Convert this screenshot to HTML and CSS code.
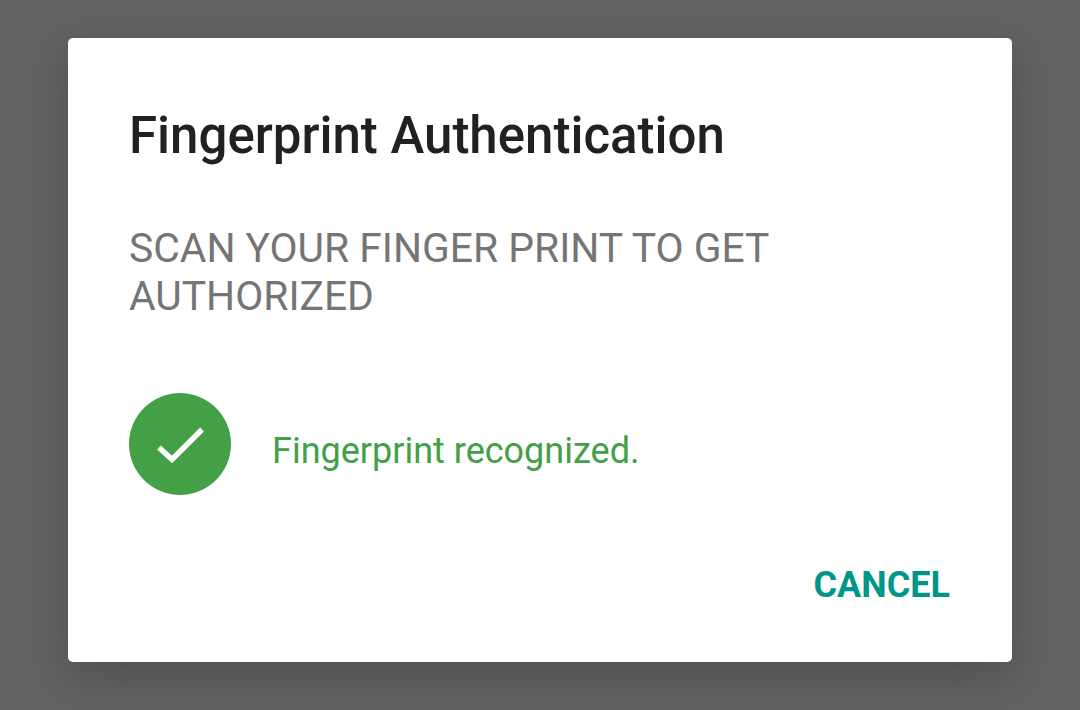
FILE: index.html
```html
<!DOCTYPE html>
<html lang="en">
<head>
  <meta charset="UTF-8" />
  <title>Fingerprint Authentication</title>
  <link rel="stylesheet" href="styles.css">
</head>
<body>
  <div class="dialog">
    <h1 class="title">Fingerprint Authentication</h1>
    <p class="desc">SCAN YOUR FINGER PRINT TO GET AUTHORIZED</p>
    <div class="status">
      <div class="status-icon">
        <svg width="102" height="102" viewBox="0 0 102 102">
          <path d="M30 54.500 L43 66.500 L73 36.500" fill="none" stroke="#fff" stroke-width="5.500"/>
        </svg>
      </div>
      <span class="status-text">Fingerprint recognized.</span>
    </div>
    <div class="actions">
      <button class="cancel">CANCEL</button>
    </div>
  </div>
</body>
</html>
```

FILE: styles.css
```css
html, body {
  height: 100%;
}
body {
  margin: 0;
  background: #636363;
  font-family: Roboto, sans-serif;
  overflow: hidden;
}
.dialog {
  box-sizing: border-box;
  width: 944px;
  height: 624px;
  margin: 38px 0 0 68px;
  padding: 70px 62px 0 61px;
  background: #fff;
  border-radius: 5px;
  box-shadow: 0 14px 50px rgba(0, 0, 0, 0.22);
}
.title {
  margin: 0;
  font-size: 51px;
  line-height: 56px;
  font-weight: 500;
  color: #212121;
}
.desc {
  width: 680px;
  margin: 60px 0 0;
  font-size: 40.800px;
  line-height: 48px;
  color: #757575;
}
.status {
  display: flex;
  align-items: center;
  margin-top: 73px;
}
.status-icon {
  width: 102px;
  height: 102px;
  border-radius: 50%;
  background: #43a047;
}
.status-text {
  margin: 14px 0 0 41px;
  font-size: 36px;
  color: #43a047;
}
.actions {
  display: flex;
  justify-content: flex-end;
  margin-top: 69px;
}
.cancel {
  padding: 0;
  border: none;
  background: none;
  font-family: inherit;
  font-size: 36px;
  font-weight: 700;
  color: #009688;
}
```
